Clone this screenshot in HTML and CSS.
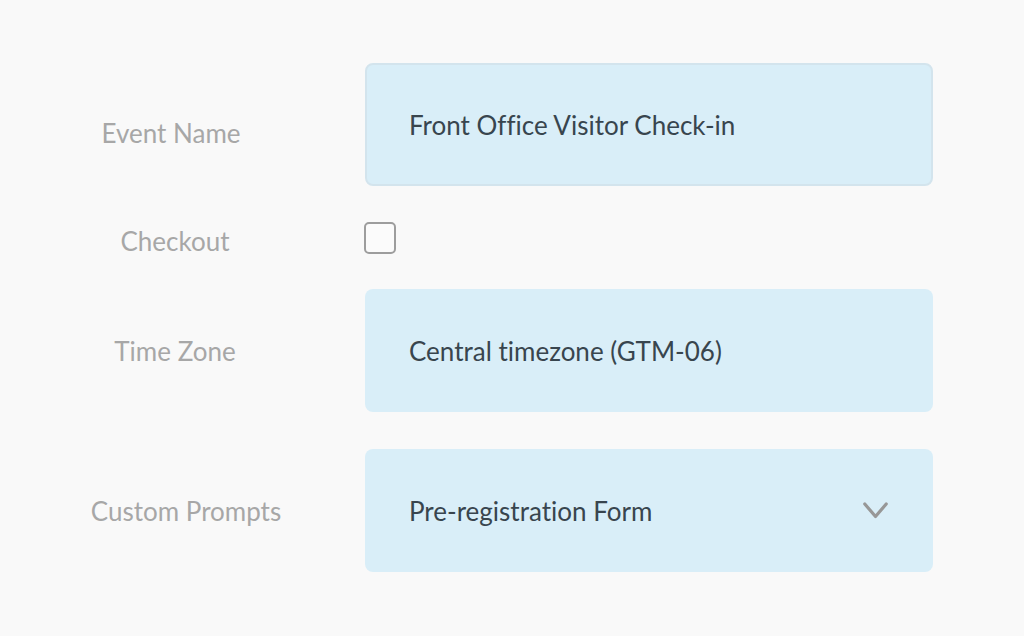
FILE: index.html
```html
<!DOCTYPE html>
<html>
<head>
<meta charset="utf-8">
<link rel="stylesheet" href="styles.css">
</head>
<body>
<form class="form">
  <div class="row">
    <div class="label label-first">Event Name</div>
    <div class="field field-bordered">Front Office Visitor Check-in</div>
  </div>
  <div class="row row-check">
    <div class="label label-check">Checkout</div>
    <div class="check-wrap"><span class="checkbox"></span></div>
  </div>
  <div class="row">
    <div class="label">Time Zone</div>
    <div class="field">Central timezone (GTM-06)</div>
  </div>
  <div class="row">
    <div class="label label-wide">Custom Prompts</div>
    <div class="field field-select">
      <span>Pre-registration Form</span>
      <svg class="chevron" width="25" height="17" viewBox="0 0 25 17"><path d="M1.8 2 L12.5 14.5 L23.2 2" fill="none" stroke="#979797" stroke-width="3.2" stroke-linecap="round" stroke-linejoin="round"/></svg>
    </div>
  </div>
</form>
</body>
</html>
```

FILE: styles.css
```css
html, body {
  margin: 0;
  padding: 0;
  background: #f9f9f9;
  font-family: Lato, "Open Sans", sans-serif;
  font-variant-ligatures: none;
}
.form {
  display: flex;
  flex-direction: column;
  gap: 37px;
  padding: 63px 0 0 40px;
}
.row {
  display: grid;
  grid-template-columns: 270px 568px;
  column-gap: 55px;
  align-items: center;
}
.row-check {
  grid-template-rows: 31px;
  margin-top: -1px;
  margin-bottom: -1px;
}
.label {
  text-align: center;
  color: #a7a7a7;
  font-size: 26px;
}
.label-first {
  padding-top: 16px;
  padding-right: 8px;
}
.label-check {
  line-height: 31px;
  margin-top: 8px;
}
.label-wide {
  padding-left: 22px;
}
.field {
  box-sizing: border-box;
  height: 123px;
  background: #d9eef8;
  border-radius: 8px;
  display: flex;
  align-items: center;
  padding: 0 45px 0 44px;
  color: #38454e;
  font-size: 26px;
}
.field-bordered {
  border: 2px solid #d3e4ed;
  padding-left: 42px;
  padding-top: 1px;
}
.field-select {
  justify-content: space-between;
}
.chevron {
  display: block;
}
.check-wrap {
  height: 31px;
  display: flex;
  align-items: center;
}
.checkbox {
  box-sizing: border-box;
  width: 32px;
  height: 32px;
  border: 2px solid #9d9d9d;
  border-radius: 5px;
  margin-left: -1px;
  background: #fbfbfb;
}
```
